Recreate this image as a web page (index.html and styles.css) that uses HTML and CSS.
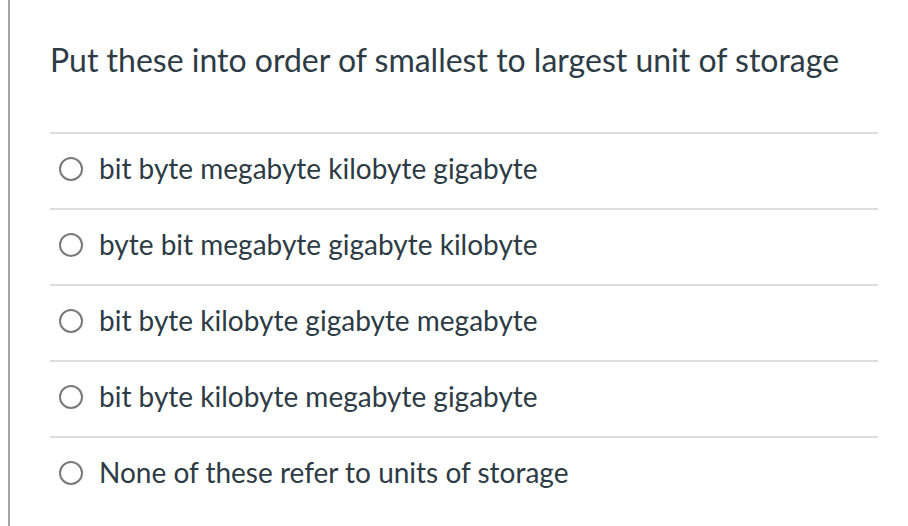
FILE: index.html
```html
<!DOCTYPE html>
<html>
<head>
<meta charset="utf-8">
<link rel="stylesheet" href="styles.css">
</head>
<body>
<div class="frame">
  <div class="question">
    <p class="prompt">Put these into order of smallest to largest unit of storage</p>
    <ul class="answers">
      <li class="answer"><span class="radio"></span><span class="label">bit byte megabyte kilobyte gigabyte</span></li>
      <li class="answer"><span class="radio"></span><span class="label">byte bit megabyte gigabyte kilobyte</span></li>
      <li class="answer"><span class="radio"></span><span class="label">bit byte kilobyte gigabyte megabyte</span></li>
      <li class="answer"><span class="radio"></span><span class="label">bit byte kilobyte megabyte gigabyte</span></li>
      <li class="answer"><span class="radio"></span><span class="label">None of these refer to units of storage</span></li>
    </ul>
  </div>
</div>
</body>
</html>
```

FILE: styles.css
```css
html, body {
  margin: 0;
  padding: 0;
  background: #fff;
}
body {
  font-family: Lato, "Liberation Sans", sans-serif;
  color: #2d3b45;
}
.frame {
  margin-left: 8px;
  border-left: 2px solid #a5a5a5;
  height: 526px;
  box-sizing: border-box;
  padding: 0 30px 0 40px;
}
.question {
  padding-top: 40px;
}
.prompt {
  margin: 0;
  font-size: 32px;
  line-height: 44px;
  height: 92px;
  margin-top: -2px;
  padding-top: 0;
}
.answers {
  list-style: none;
  margin: 0;
  margin-top: 2px;
  padding: 0;
}
.answer {
  display: flex;
  align-items: center;
  gap: 16px;
  height: 74px;
  box-sizing: content-box;
  border-top: 2px solid #dcdcdc;
  padding-left: 9px;
  font-size: 28px;
}
.label {
  position: relative;
  top: -3px;
}
.radio {
  width: 20px;
  height: 20px;
  border: 2px solid #7a7a7a;
  border-radius: 50%;
  flex: none;
  position: relative;
  top: -2px;
}
```
